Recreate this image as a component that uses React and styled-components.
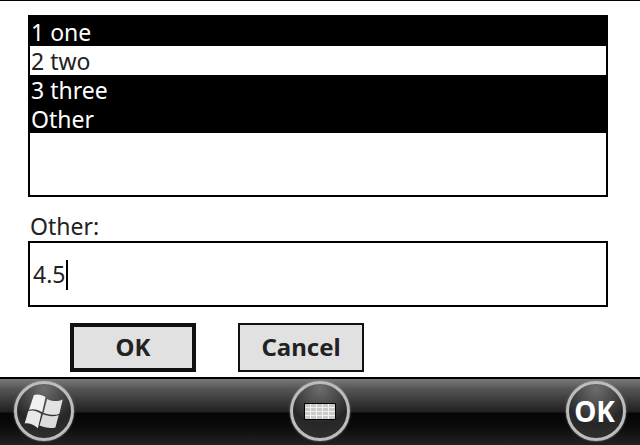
import React from "react";
import styled, { createGlobalStyle } from "styled-components";

const Global = createGlobalStyle`
  html, body { margin: 0; padding: 0; background: #fff; }
  #root { width: 640px; height: 445px; overflow: hidden; }
`;

const Page = styled.div`
  width: 640px;
  height: 445px;
  display: flex;
  flex-direction: column;
  box-sizing: border-box;
  border-top: 1px solid #000;
  font-family: "Noto Sans", "DejaVu Sans", sans-serif;
  color: #222;
`;

const Content = styled.main`
  height: 376px;
  box-sizing: border-box;
  padding: 14px 32px 0 28px;
  display: flex;
  flex-direction: column;
`;

const List = styled.ul`
  list-style: none;
  margin: 0;
  padding: 0;
  height: 182px;
  box-sizing: border-box;
  border: 2px solid #000;
`;

const Row = styled.li`
  height: 29px;
  line-height: 30px;
  padding-left: 1px;
  font-size: 23px;
  background: ${(p) => (p.$selected ? "#000" : "#fff")};
  color: ${(p) => (p.$selected ? "#fff" : "#222")};
`;

const Label = styled.label`
  display: block;
  margin-top: 16px;
  height: 28px;
  line-height: 27px;
  padding-left: 2px;
  font-size: 23px;
`;

const Input = styled.div`
  height: 66px;
  box-sizing: border-box;
  border: 2px solid #000;
  padding: 16px 0 0 3px;
  display: flex;
  align-items: flex-start;
  font-size: 23px;
  line-height: 31px;
`;

const Caret = styled.span`
  display: block;
  width: 2px;
  height: 30px;
  margin: 1px 0 0 1px;
  background: #000;
`;

const Buttons = styled.div`
  display: flex;
  gap: 42px;
  margin-top: 16px;
  padding-left: 42px;
`;

const Button = styled.button`
  width: 126px;
  height: 49px;
  box-sizing: border-box;
  padding: 0 0 2px;
  background: #e1e1e1;
  border: ${(p) => (p.$default ? "4px" : "2px")} solid #111;
  color: #222;
  font: 700 24px "Noto Sans", sans-serif;
`;

const Bar = styled.footer`
  height: 68px;
  box-sizing: border-box;
  border-top: 2px solid #000;
  padding: 2px 14px 0 14px;
  display: flex;
  align-items: flex-start;
  justify-content: space-between;
  background: linear-gradient(to bottom, #7a7a7a 0, #555 10px, #202020 33px, #050505 34px, #0b0b0b 48px, #222 66px);
`;

const Round = styled.button`
  width: 60px;
  height: 60px;
  padding: 0;
  box-sizing: border-box;
  border-radius: 50%;
  border: 3px solid #bdbdbd;
  box-shadow: 0 0 2px #999;
  background: radial-gradient(circle at 50% 8%, #6e6e6e 0, #474747 35%, #262626 62%, #333 100%);
  display: flex;
  align-items: center;
  justify-content: center;
  color: #fff;
  font: 700 28px "Noto Sans", sans-serif;
`;

const OkGlyph = styled.span`
  margin: 0 3px 1px 0;
`;

const Keyboard = () => (
  <svg width="32" height="17" viewBox="0 0 32 17">
    <rect width="32" height="17" fill="#000" />
    <rect x="1" y="1" width="30" height="15" fill="#c9ccc6" />
    {[4, 8, 12].map((y) => <rect key={y} x="1" y={y} width="30" height="1" fill="#efefef" />)}
    {[6, 12, 18, 24].map((x) => <rect key={x} x={x} y="1" width="1" height="15" fill="#f2f2f2" />)}
  </svg>
);

const Flag = () => (
  <svg width="43" height="40" viewBox="70 60 130 120">
    <path d="M103 72 C115 68 128 72 138 78 L128 124 C116 116 102 112 88 116 Z" fill="#f0f0f0" />
    <path d="M143 84 C158 92 175 92 190 85 L180 128 C165 134 148 132 132 125 Z" fill="#e2e2e2" />
    <path d="M86 120 C100 116 113 120 125 129 L115 172 C103 162 90 154 75 158 Z" fill="#e8e8e8" />
    <path d="M130 130 C145 136 162 138 178 132 L168 170 C152 174 135 170 120 164 Z" fill="#dcdcdc" />
  </svg>
);

export default function App() {
  return (
    <>
      <Global />
      <Page>
        <Content>
          <List>
            <Row $selected>1 one</Row>
            <Row>2 two</Row>
            <Row $selected>3 three</Row>
            <Row $selected>Other</Row>
          </List>
          <Label>Other:</Label>
          <Input>4.5<Caret /></Input>
          <Buttons>
            <Button $default>OK</Button>
            <Button>Cancel</Button>
          </Buttons>
        </Content>
        <Bar>
          <Round><Flag /></Round>
          <Round><Keyboard /></Round>
          <Round><OkGlyph>OK</OkGlyph></Round>
        </Bar>
      </Page>
    </>
  );
}
